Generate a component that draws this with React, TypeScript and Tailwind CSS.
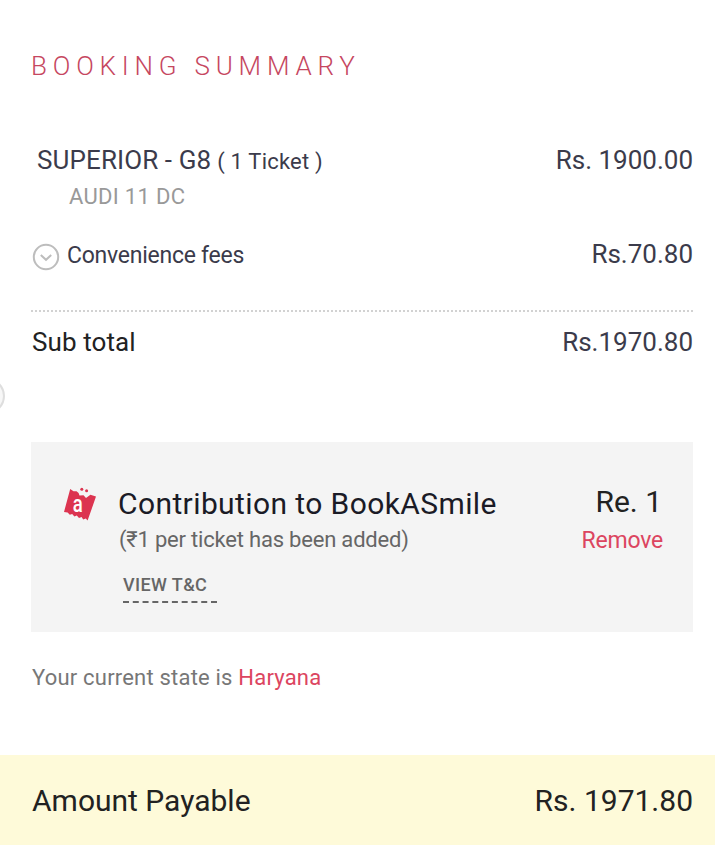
const SmileIcon = () => {
  return (
    <svg width="34" height="36" viewBox="0 0 34 36" fill="none">
      <path
        d="M7.2 3 L10.5 5.2 L13.5 5.2 L15.6 7 L16.5 9.6 L20.5 9.2 L23 12 L27.4 8.8 L33 10.6 L24.6 34.6 L22.8 32.4 L20.2 33.4 L18.6 31 L16 32 L13.8 29.4 L11.4 30.4 L9.2 27.9 L6.8 28.8 L4.6 26.5 L1 26 Z"
        fill="#DC3450"
      />
      <circle cx="18.8" cy="3.2" r="1.5" fill="#DC3450" />
      <circle cx="23.6" cy="4.8" r="1.5" fill="#DC3450" />
      <text
        x="9.8"
        y="25.6"
        fill="#fff"
        fontSize="23"
        fontWeight="500"
        fontFamily="Roboto, sans-serif"
        textLength="10"
        lengthAdjust="spacingAndGlyphs"
      >
        a
      </text>
    </svg>
  );
};

const ArrowIcon = () => {
  return (
    <svg width="28" height="28" viewBox="0 0 28 28" fill="none">
      <circle cx="14" cy="14" r="12.2" stroke="#BDBDBD" strokeWidth="2" />
      <path d="M8.8 12 L14 16.8 L19.2 12" stroke="#BDBDBD" strokeWidth="2" />
    </svg>
  );
};

const App = () => {
  return (
    <main className="relative flex flex-col w-full h-[845px] overflow-hidden bg-white font-['Roboto',sans-serif] text-[#3b3b4b]">
      {/* edge of the carousel button */}
      <div className="absolute left-[-31px] top-[378px] w-9 h-9 rounded-full border-2 border-[#dedede] bg-[#f7f7f7]" />

      <section className="flex flex-col pl-[31px] pr-[22px] pt-[50px]">
        <h1 className="h-8 leading-8 text-[26px] font-light tracking-[5.8px] text-[#C6475F]">
          BOOKING SUMMARY
        </h1>

        <div className="mt-[62px] flex justify-between h-8 leading-8 text-[26px]">
          <p className="pl-1.5">
            <span className="tracking-[0.1px]">SUPERIOR - G8</span>
            <span className="ml-1.5 text-[22px] tracking-[0.2px]">( 1 Ticket )</span>
          </p>
          <p>Rs. 1900.00</p>
        </div>
        <p className="mt-[9px] pl-[38px] h-6 leading-6 text-[22px] tracking-[0.3px] text-[#999]">
          AUDI 11 DC
        </p>

        <div className="mt-[29px] flex justify-between h-8 leading-8 text-[26px]">
          <div className="flex items-center gap-[7px] pt-[5px] pl-px">
            <ArrowIcon />
            <span className="-mt-px text-[23px] tracking-[-0.25px]">Convenience fees</span>
          </div>
          <p>Rs.70.80</p>
        </div>
      </section>

      <section className="mt-10 ml-[31px] mr-[22px] border-t-2 border-dotted border-[#d2d2d2]">
        <div className="mt-[14px] flex justify-between h-8 leading-8 text-[26px]">
          <p className="pl-px tracking-[0.1px] text-[#222]">Sub total</p>
          <p>Rs.1970.80</p>
        </div>
      </section>

      <section className="mt-[84px] ml-[31px] mr-[22px] h-[190px] bg-[#F4F4F4] pt-[44px] pl-8 pr-[30px] flex justify-between">
        <div className="flex">
          <SmileIcon />
          <div className="flex flex-col items-start pl-[21px]">
            <h2 className="mt-0.5 h-8 leading-8 text-[30px] tracking-[0.4px] text-[#1b1b26]">
              Contribution to BookASmile
            </h2>
            <p className="mt-2 pl-px h-6 leading-6 text-[22px] tracking-[-0.2px] text-[#666]">
              (₹1 per ticket has been added)
            </p>
            <button className="mt-[19px] ml-[5px] w-[94px] h-8 pb-0.5 leading-6 text-left text-[18px] font-medium tracking-[0.4px] text-[#666] border-b-2 border-dashed border-[#666]">
              VIEW T&amp;C
            </button>
          </div>
        </div>
        <div className="flex flex-col items-end">
          <p className="pr-px h-8 leading-8 text-[30px] text-[#222]">Re. 1</p>
          <button className="mt-[11px] h-6 leading-6 text-[23px] tracking-[-0.2px] text-[#DC4560]">
            Remove
          </button>
        </div>
      </section>

      <p className="mt-[34px] pl-8 h-6 leading-6 text-[22px] tracking-[0.2px] text-[#777]">
        Your current state is <span className="text-[#DC4560]">Haryana</span>
      </p>

      <footer className="mt-auto h-[90px] leading-[92px] bg-[#FEFAD9] pl-8 pr-[22px] flex justify-between text-[30px] text-[#222]">
        <p>Amount Payable</p>
        <p>Rs. 1971.80</p>
      </footer>
    </main>
  );
};

export default App;
